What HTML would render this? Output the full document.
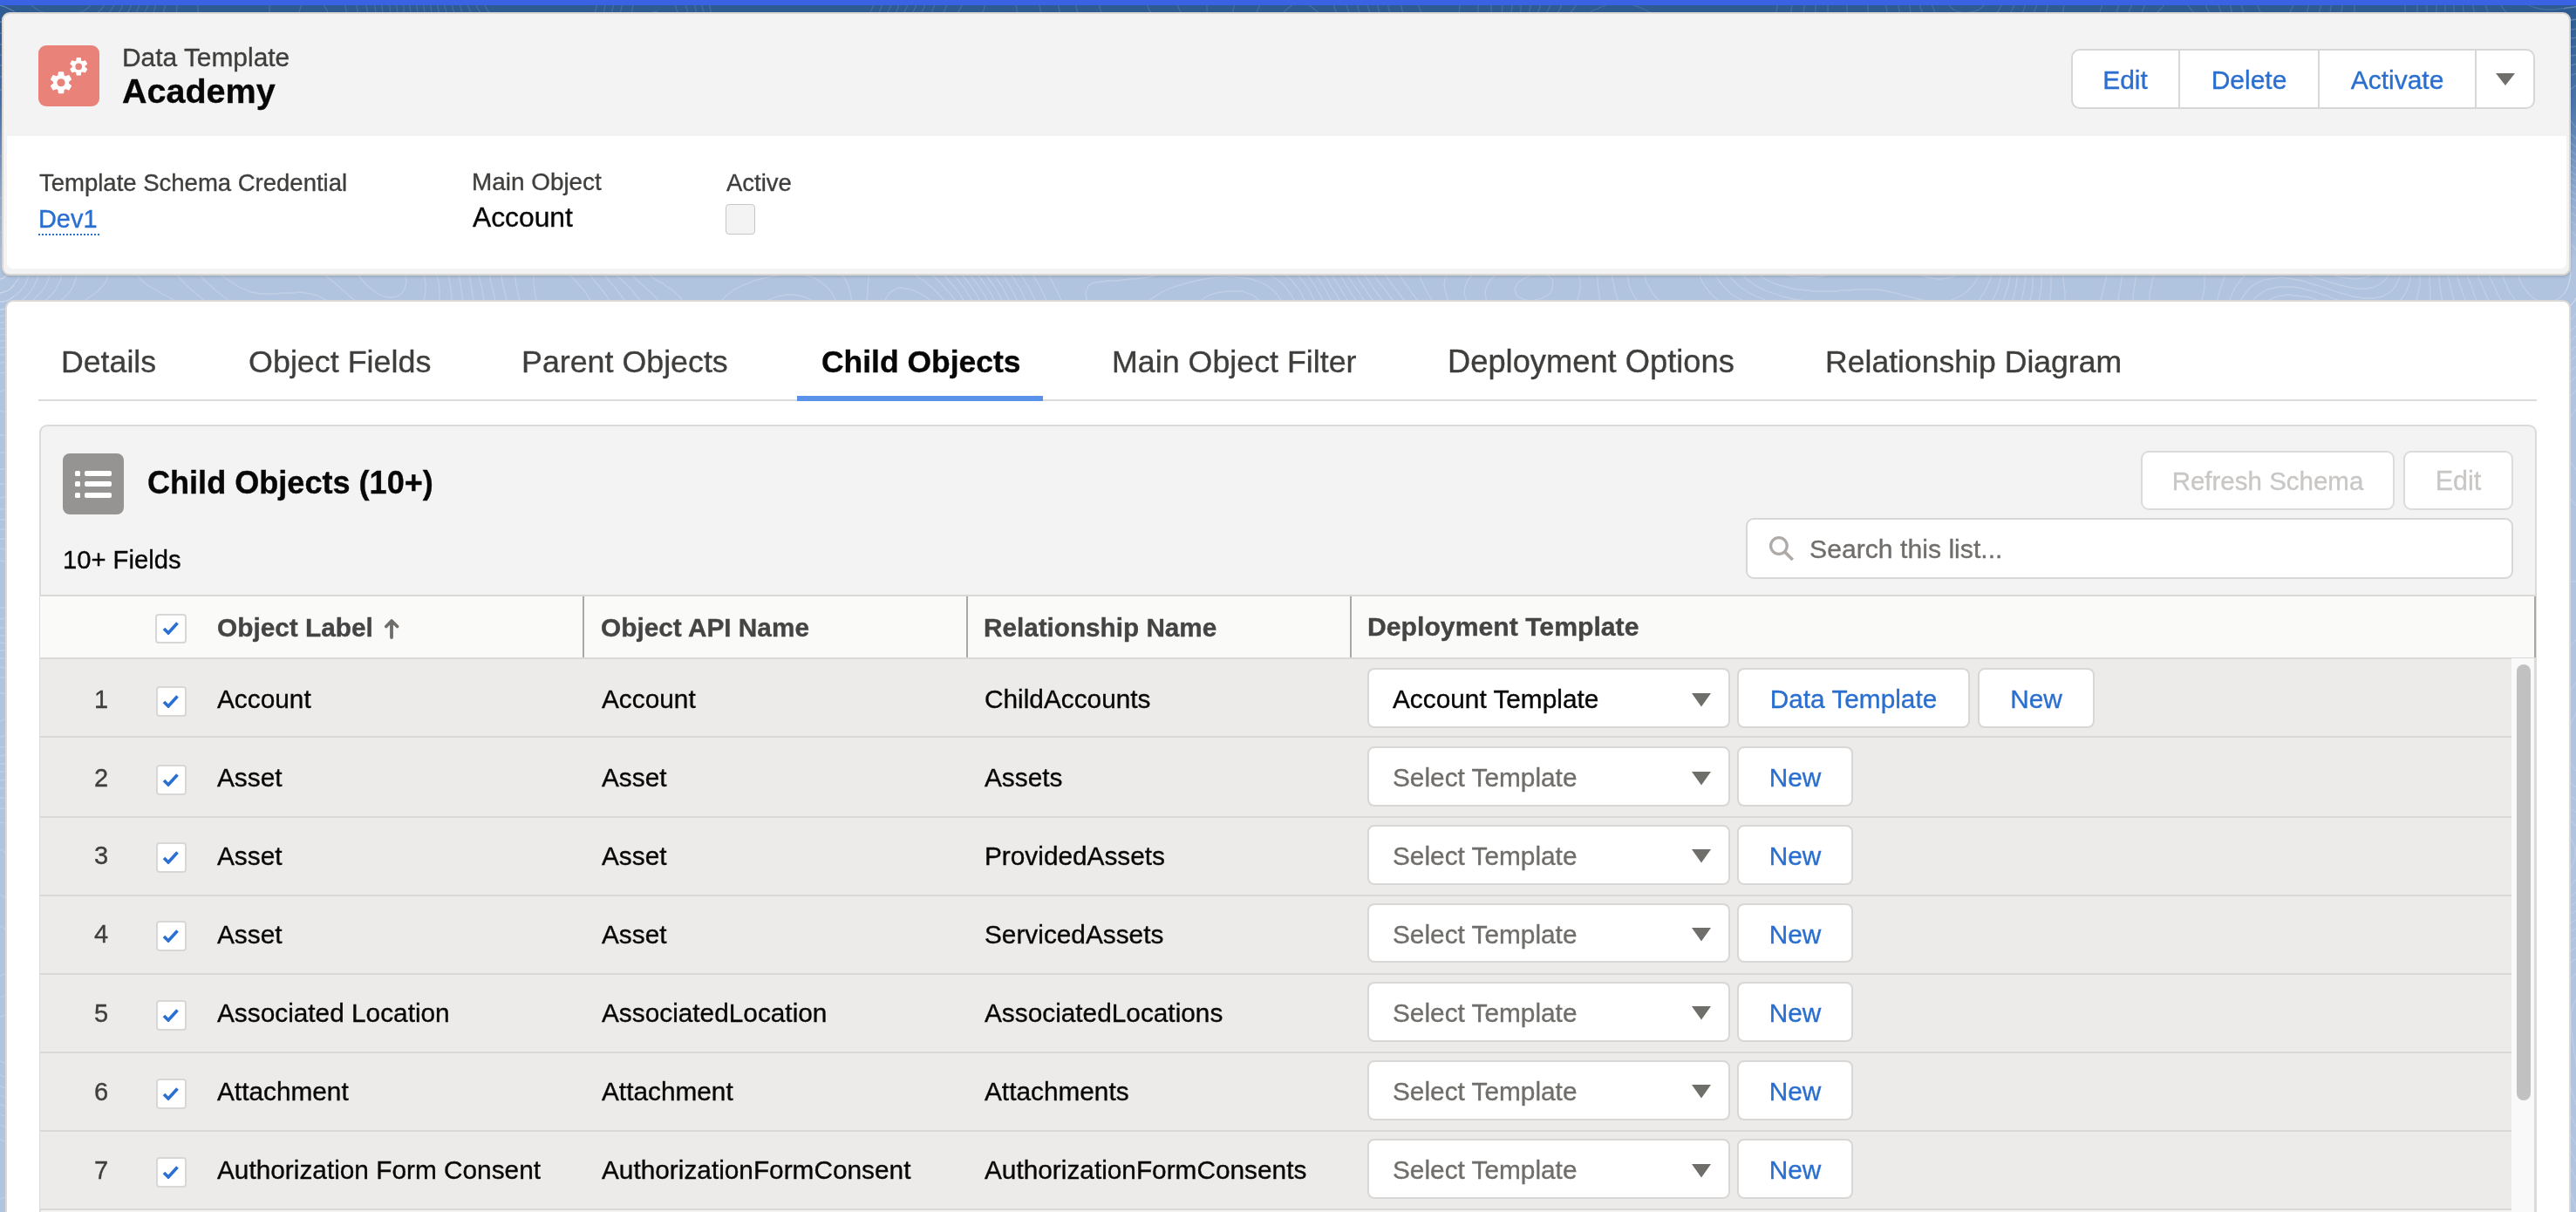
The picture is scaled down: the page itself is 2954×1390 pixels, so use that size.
<!DOCTYPE html><html><head><meta charset="utf-8"><style>
html,body{margin:0;padding:0;width:2954px;height:1390px;overflow:hidden;}
body{width:2954px;height:1390px;overflow:hidden;position:relative;font-family:"Liberation Sans",sans-serif;
background:linear-gradient(180deg,#2d5b92 0px,#2d5b92 14px,#4a74aa 120px,#8ea8cc 220px,#b1c4df 300px,#b1c4df 1390px);}
.t{position:absolute;white-space:nowrap;line-height:1;will-change:transform;-webkit-text-stroke:0.35px currentColor;}
.r{position:absolute;box-sizing:border-box;}
</style></head><body>
<svg style="position:absolute;left:0;top:0" width="2954" height="1390"><path fill="none" stroke="rgba(255,255,255,0.12)" stroke-width="1.3" d="M555,0 556,6 559,12 563,16 567,20 572,23 576,26 580,28 M675,28 677,24 680,19 683,12 684,8 685,0 685,0 M813,0 814,8 816,16 818,20 820,25 822,28 M988,28 992,23 996,18 999,12 1001,8 1002,0 1002,0 M545,0 547,8 549,12 552,16 556,21 560,24 566,28 566,28 M686,28 688,24 691,16 693,12 694,4 694,0 M804,0 805,8 808,16 809,20 812,26 813,28 M999,28 1002,24 1005,20 1008,14 1011,8 1012,3 1012,0 M535,0 536,5 539,12 541,16 544,20 548,24 553,28 553,28 M696,28 700,20 701,16 703,8 704,0 704,0 M796,0 796,4 798,12 800,19 802,24 804,28 804,28 M1009,28 1012,24 1016,17 1019,12 1021,8 1022,0 1022,0 M526,0 528,8 529,12 532,17 536,23 540,27 541,28 M707,28 708,24 711,16 712,12 714,4 714,0 M786,0 787,8 788,12 791,20 793,24 795,28 M1018,28 1021,24 1024,20 1028,13 1030,8 1031,0 1031,0 M518,0 519,8 520,12 524,20 526,24 529,28 529,28 M718,28 720,24 723,16 725,12 726,4 726,0 M774,0 775,8 776,12 780,20 782,24 784,28 784,28 M1028,28 1031,24 1033,20 1036,16 1040,8 1041,4 1041,0 M509,0 510,8 512,14 514,20 516,24 519,28 M1037,28 1040,24 1044,19 1048,12 1050,8 1051,0 1051,0 M734,28 737,24 740,20 744,16 752,13 757,16 762,20 766,24 769,28 769,28 M501,0 502,8 504,16 505,20 508,27 509,28 M1047,28 1050,24 1053,20 1056,16 1060,8 1061,4 1061,0 M1873,28 1868,26 1860,24 1856,24 1848,23 1840,24 1836,24 1828,26 1823,28 1823,28 M33,0 36,6 40,9 44,12 52,15 56,16 64,17 72,17 80,17 85,16 92,14 97,12 102,8 106,4 107,0 M493,0 494,8 495,16 496,20 499,28 499,28 M1058,28 1062,24 1065,20 1068,15 1071,8 1073,4 1073,0 M1911,28 1907,24 1902,20 1896,16 1892,14 1888,12 1880,8 1876,7 1868,4 1864,2 1856,0 1848,3 1844,5 1836,8 1832,10 1827,12 1820,16 1816,18 1812,21 1807,24 1802,28 1802,28 M1990,0 1996,2 1997,0 M2233,0 2236,7 2240,11 2244,13 2252,15 2260,14 2268,12 2272,9 2276,5 2277,0 2277,0 M0,6 6,8 12,11 16,13 21,16 28,20 32,21 40,24 44,25 52,26 60,27 68,27 76,27 84,26 92,24 96,23 103,20 108,17 112,14 116,11 120,5 121,0 121,0 M485,0 486,8 487,16 488,20 490,28 490,28 M1071,28 1074,24 1078,20 1081,16 1084,10 1086,4 1087,0 M1809,0 1808,5 1804,11 1800,15 1796,20 1792,24 1789,28 1789,28 M2034,28 2036,20 2036,16 2038,8 2038,0 2038,0 M2215,0 2216,7 2218,12 2220,16 2224,20 2229,24 2236,28 2236,28 M2267,28 2272,26 2277,24 2283,20 2288,16 2292,12 2294,8 2296,4 2297,0 M2505,28 2500,26 2492,26 2484,28 2484,28 M104,28 112,24 116,22 120,19 124,16 128,11 132,4 132,0 132,0 M478,0 478,8 479,16 480,21 482,28 482,28 M1086,28 1090,24 1094,20 1098,16 1100,12 1104,4 1104,0 M1792,0 1790,8 1788,12 1784,18 1780,24 1778,28 1778,28 M2053,28 2054,20 2054,12 2055,4 2055,0 M2201,0 2202,8 2204,14 2207,20 2209,24 2212,28 2212,28 M2292,28 2296,25 2300,21 2304,17 2307,12 2309,8 2311,0 2311,0 M2484,0 2483,4 2480,8 2476,12 2472,17 2468,21 2464,25 2461,28 M2528,28 2524,24 2520,19 2516,15 2512,10 2508,5 2506,0 2506,0 M2701,0 2700,8 2700,12 2698,20 2696,27 2696,28 M2757,28 2758,20 2758,12 2758,4 2758,0 M0,25 8,26 15,28 15,28 M120,28 126,24 131,20 135,16 138,12 140,8 142,0 142,0 M470,0 470,8 471,16 472,21 473,28 473,28 M1112,28 1116,25 1120,22 1124,18 1128,12 1129,8 1130,0 1130,0 M1486,0 1484,4 1479,8 1474,12 1470,16 1465,20 1461,24 1457,28 1457,28 M1526,28 1522,24 1518,20 1513,16 1509,12 1504,8 1500,5 1496,0 1496,0 M1778,0 1777,8 1775,12 1772,20 1770,24 1768,28 1768,28 M2067,28 2068,20 2068,16 2069,8 2069,0 2069,0 M2189,0 2190,8 2191,16 2193,20 2196,28 2196,28 M2308,28 2312,24 2316,19 2320,13 2322,8 2323,0 2323,0 M2461,0 2460,5 2457,12 2455,16 2452,20 2448,26 2447,28 M2541,28 2539,24 2536,19 2532,12 2530,8 2529,0 2529,0 M2686,0 2686,8 2684,16 2683,20 2681,28 2681,28 M2771,28 2771,20 2772,12 2772,8 2772,0 2772,0 M133,28 138,24 142,20 145,16 148,12 151,4 151,0 M462,0 463,8 463,16 464,21 465,28 465,28 M1172,28 1170,24 1168,18 1166,12 1165,4 1165,0 M1445,0 1444,7 1442,12 1440,16 1436,23 1433,28 1433,28 M1542,28 1540,24 1536,19 1532,13 1530,8 1528,0 1528,0 M1767,0 1766,8 1764,13 1762,20 1760,24 1759,28 M2081,28 2081,20 2082,12 2082,4 2082,0 M2177,0 2177,8 2179,16 2180,22 2182,28 2182,28 M2323,28 2326,24 2329,20 2332,15 2335,8 2336,0 2336,0 M2445,0 2444,7 2442,12 2440,17 2436,24 2433,28 2433,28 M2554,28 2551,24 2548,17 2546,12 2544,6 2543,0 2543,0 M2673,0 2673,8 2672,14 2671,20 2668,28 2668,28 M2782,28 2783,20 2783,12 2783,4 2783,0 M145,28 149,24 152,20 156,15 159,8 160,4 161,0 M454,0 455,8 456,16 456,20 457,28 457,28 M1202,28 1199,24 1196,18 1193,12 1192,7 1191,0 1191,0 M1416,0 1416,4 1414,12 1412,20 1411,24 1410,28 M1555,28 1552,23 1548,16 1546,12 1544,6 1543,0 1543,0 M1756,0 1755,8 1753,16 1752,20 1749,28 1749,28 M2096,28 2096,20 2096,12 2096,4 2096,0 M2163,0 2163,8 2164,13 2165,20 2166,28 2166,28 M2339,28 2342,24 2344,20 2347,12 2348,8 2349,0 2349,0 M2430,0 2429,8 2428,12 2424,19 2421,24 2419,28 2419,28 M2566,28 2564,24 2560,16 2559,12 2557,4 2556,0 M2661,0 2661,8 2660,12 2658,20 2656,26 2655,28 M2793,28 2793,20 2794,12 2794,4 2794,0 M156,28 160,23 164,18 167,12 169,8 170,0 170,0 M446,0 447,8 448,16 448,20 449,28 449,28 M1223,28 1220,23 1216,16 1215,12 1213,4 1212,0 M1383,0 1384,8 1384,12 1385,20 1386,28 1386,28 M1566,28 1564,24 1560,16 1558,12 1556,4 1556,0 1556,0 M1745,0 1744,8 1744,12 1742,20 1740,28 1740,28 M2120,28 2119,20 2118,12 2118,4 2118,0 M2142,0 2142,8 2142,16 2143,24 2143,28 M2359,28 2362,24 2364,18 2366,12 2367,4 2367,0 M2412,0 2410,8 2408,14 2405,20 2402,24 2400,28 2400,28 M2580,28 2578,24 2576,20 2572,12 2571,8 2570,0 2570,0 M2648,0 2647,8 2645,16 2644,20 2640,28 2640,28 M2804,28 2804,20 2804,12 2804,4 2804,0 M168,28 171,24 173,20 176,15 178,8 179,0 179,0 M438,0 438,8 439,16 440,22 441,28 441,28 M1243,28 1240,22 1237,16 1235,12 1233,4 1233,0 M1350,0 1351,8 1353,12 1356,19 1359,24 1361,28 1361,28 M1577,28 1575,24 1572,18 1570,12 1568,6 1567,0 1567,0 M1734,0 1734,8 1733,16 1732,20 1731,28 1731,28 M2630,0 2629,8 2627,12 2624,18 2620,22 2616,24 2608,25 2603,24 2598,20 2594,16 2591,12 2588,4 2588,0 2588,0 M2815,28 2815,20 2814,12 2814,4 2814,0 M181,28 184,22 187,16 188,12 190,4 190,0 M429,0 430,8 431,16 432,24 432,28 432,28 M1269,28 1267,24 1264,17 1262,12 1260,4 1260,0 M1315,0 1316,7 1318,12 1321,16 1324,20 1328,25 1330,28 M1589,28 1586,24 1584,19 1581,12 1580,8 1579,0 1579,0 M1723,0 1723,8 1722,16 1721,24 1720,28 M2827,28 2826,20 2825,12 2824,4 2824,0 M197,28 200,21 202,16 203,8 204,1 204,0 M420,0 420,5 421,12 422,20 423,28 423,28 M1601,28 1599,24 1596,18 1593,12 1592,8 1591,0 1591,0 M1710,0 1710,8 1710,16 1709,24 1709,28 M2843,28 2840,22 2838,16 2836,8 2836,4 2836,0 M258,28 252,28 244,28 236,26 232,24 228,16 227,12 227,4 227,0 M409,0 409,8 411,16 412,22 413,28 413,28 M1616,28 1612,21 1609,16 1608,12 1606,4 1605,0 M1696,0 1695,8 1695,16 1694,24 1694,28 M2864,28 2860,24 2856,20 2854,16 2852,12 2850,4 2849,0 M312,28 310,20 309,12 309,4 309,0 M395,0 396,7 397,12 399,20 400,24 401,28 M1641,28 1637,24 1634,20 1631,16 1628,10 1626,4 1626,0 M1674,0 1674,8 1673,16 1672,21 1670,28 1670,28 M2956,22 2948,23 2940,24 2936,24 2928,25 2920,25 2912,25 2904,24 2900,24 2892,23 2884,20 2880,18 2876,16 2872,12 2868,6 2867,0 2867,0 M339,28 340,23 342,16 344,11 346,4 347,0 M370,0 372,7 375,12 377,16 380,21 384,28 384,28 M2956,7 2952,8 2944,9 2936,10 2928,11 2920,11 2912,10 2904,8 2900,6 2896,2 2895,0"/><path fill="none" stroke="rgba(255,255,255,0.2)" stroke-width="1.3" d="M2037,288 2043,292 2048,294 2054,296 2060,297 2068,297 2072,296 2080,294 2084,292 2092,288 2092,288 M2013,288 2016,293 2020,298 2024,303 2028,306 2032,308 2039,312 2044,314 2051,316 2056,317 2064,318 2072,318 2080,318 2088,317 2092,316 2100,314 2108,312 2112,311 2120,308 2124,307 2132,304 2136,304 2144,302 2152,302 2160,303 2167,304 2172,305 2180,308 2184,309 2192,312 2196,313 2204,316 2208,317 2216,319 2224,320 2232,319 2240,317 2244,315 2248,312 2252,308 2256,303 2259,296 2261,292 2261,288 M683,356 680,349 677,344 674,340 672,336 668,331 664,327 660,322 656,318 652,314 648,310 644,307 640,304 633,300 628,299 621,300 617,304 614,308 612,316 612,324 613,332 614,340 616,347 618,352 619,356 M1762,344 1768,342 1773,340 1778,336 1780,332 1781,324 1780,320 1775,316 1768,314 1760,314 1754,316 1748,319 1744,322 1740,325 1737,332 1740,340 1744,342 1749,344 1756,345 1762,344 1762,344 M590,288 589,296 589,304 590,312 591,320 592,328 593,332 595,340 596,346 598,352 599,356 M705,356 703,352 700,347 696,340 693,336 690,332 687,328 683,324 680,320 676,315 672,310 668,305 664,300 661,296 658,292 655,288 655,288 M1783,288 1776,288 1768,290 1761,292 1756,294 1750,296 1744,298 1740,300 1732,304 1728,307 1724,309 1720,312 1715,316 1710,320 1707,324 1704,331 1703,336 1704,342 1707,348 1710,352 1715,356 1715,356 M1801,356 1805,352 1808,346 1810,340 1812,332 1812,324 1811,316 1809,308 1808,304 1804,298 1800,293 1796,291 1788,288 1784,288 M1997,288 2000,295 2003,300 2006,304 2009,308 2013,312 2018,316 2024,320 2028,322 2032,324 2040,327 2044,328 2052,330 2060,332 2064,332 2072,333 2080,334 2088,334 2096,334 2104,334 2112,333 2120,333 2128,332 2133,332 2140,332 2147,332 2152,332 2160,333 2168,335 2174,336 2180,338 2188,340 2192,341 2200,343 2204,344 2212,346 2220,346 2228,346 2236,345 2240,343 2247,340 2252,337 2256,334 2260,330 2264,325 2267,320 2270,316 2272,311 2274,304 2276,296 2276,292 2276,288 M571,288 572,296 572,300 573,308 575,316 576,323 577,328 579,336 580,341 582,348 584,356 584,356 M723,356 720,350 716,344 713,340 710,336 707,332 704,328 700,324 696,319 692,314 688,310 684,305 681,300 678,296 675,292 672,288 M1736,288 1728,291 1724,293 1719,296 1712,299 1708,302 1704,304 1697,308 1692,312 1688,316 1684,320 1682,324 1680,329 1679,336 1680,340 1683,348 1685,352 1688,356 1688,356 M1836,356 1835,348 1834,340 1833,332 1832,324 1832,320 1831,312 1830,304 1828,296 1828,292 1827,288 M1983,288 1985,292 1988,299 1990,304 1993,308 1996,312 2000,317 2004,321 2008,324 2014,328 2020,331 2024,333 2032,336 2036,337 2044,340 2048,341 2056,343 2064,344 2068,345 2076,346 2084,347 2092,348 2096,348 2104,349 2112,350 2120,351 2128,351 2132,352 2140,353 2148,355 2155,356 2155,356 M2258,356 2263,352 2266,348 2270,344 2272,340 2276,334 2279,328 2281,324 2284,316 2285,312 2287,304 2288,296 2288,288 2288,288 M1048,356 1044,356 1042,356 M556,288 557,292 558,300 560,308 561,312 562,320 564,328 565,332 567,340 568,347 569,352 570,356 M741,356 739,352 736,347 732,342 728,337 724,332 720,328 716,324 712,320 708,316 705,312 701,308 698,304 695,300 692,296 688,291 686,288 M1707,288 1700,291 1696,293 1688,296 1684,298 1679,300 1672,303 1668,306 1664,309 1660,313 1657,320 1656,328 1658,336 1660,343 1663,348 1665,352 1668,356 M1863,356 1860,352 1856,345 1854,340 1852,334 1851,328 1849,320 1848,312 1848,308 1847,300 1847,292 1847,288 M1970,288 1972,293 1975,300 1976,304 1980,311 1983,316 1986,320 1990,324 1994,328 2000,332 2004,335 2008,337 2014,340 2020,342 2024,344 2032,347 2037,348 2044,350 2052,352 2056,353 2064,354 2072,356 2073,356 M2278,356 2281,352 2284,346 2287,340 2289,336 2292,328 2293,324 2295,316 2296,312 2297,304 2298,296 2297,288 2297,288 M1077,356 1074,352 1070,348 1066,344 1061,340 1056,337 1052,335 1045,332 1040,331 1032,330 1026,332 1020,336 1017,340 1015,344 1012,350 1010,356 1010,356 M542,288 544,294 545,300 547,308 548,312 550,320 552,328 553,332 554,340 556,348 557,352 557,356 M761,356 759,352 756,347 752,341 748,337 744,333 740,330 736,326 732,323 728,319 724,315 720,312 716,308 712,304 708,299 704,294 700,289 699,288 M988,288 992,291 995,296 996,300 996,308 996,316 996,320 995,328 995,336 994,344 994,352 994,356 M1091,356 1088,352 1084,346 1080,341 1076,337 1072,333 1068,329 1064,326 1060,322 1056,320 1051,316 1045,312 1040,309 1036,307 1032,304 1024,300 1020,297 1016,295 1011,292 1007,288 1007,288 M1614,288 1617,292 1620,298 1623,304 1624,308 1628,316 1629,320 1632,326 1635,332 1637,336 1640,341 1644,347 1648,352 1651,356 1651,356 M1887,356 1883,352 1880,348 1876,343 1872,336 1870,332 1868,326 1867,320 1865,312 1864,304 1865,296 1866,288 1866,288 M1956,288 1959,296 1960,300 1964,308 1965,312 1968,317 1972,323 1976,328 1980,332 1984,336 1988,339 1992,341 1997,344 2004,347 2008,349 2016,352 2020,353 2028,355 2031,356 M2292,356 2294,352 2296,347 2299,340 2300,336 2303,328 2304,321 2305,316 2306,308 2306,300 2306,292 2306,288 M122,288 122,296 123,304 124,312 123,320 120,325 116,330 112,334 108,337 104,340 98,344 92,347 88,350 84,352 76,356 76,356 M218,356 212,352 208,349 204,347 199,344 192,340 188,338 184,336 178,332 172,329 168,326 164,323 160,319 156,313 153,308 152,304 149,296 148,292 145,288 M530,288 532,295 533,300 536,308 537,312 539,320 540,326 541,332 542,340 544,348 544,352 545,356 M785,356 784,349 782,344 779,340 775,336 770,332 764,328 760,325 756,323 751,320 745,316 740,313 736,310 732,307 728,303 724,300 720,296 716,292 713,288 M879,288 884,289 892,289 900,290 908,291 916,291 921,292 928,293 936,295 940,296 948,300 952,302 956,305 960,308 964,312 968,318 971,324 973,328 975,336 976,340 977,348 978,356 978,356 M1101,356 1099,352 1096,346 1092,340 1089,336 1085,332 1082,328 1078,324 1074,320 1070,316 1065,312 1061,308 1056,304 1052,300 1048,296 1044,292 1041,288 1041,288 M1584,288 1588,293 1592,298 1596,303 1599,308 1602,312 1605,316 1608,320 1612,326 1616,331 1619,336 1622,340 1625,344 1628,348 1632,352 1635,356 M1914,356 1910,352 1906,348 1902,344 1898,340 1895,336 1892,331 1888,324 1887,320 1885,312 1884,304 1885,296 1887,288 1887,288 M1938,288 1940,293 1943,300 1944,304 1947,312 1949,316 1952,323 1955,328 1958,332 1961,336 1965,340 1970,344 1976,348 1980,350 1984,352 1992,355 1995,356 M2304,356 2305,352 2308,344 2309,340 2311,332 2312,328 2313,320 2314,312 2315,304 2315,296 2314,288 2314,288 M88,288 88,292 89,300 89,308 88,316 87,320 84,328 82,332 79,336 75,340 71,344 66,348 60,352 56,354 53,356 M247,356 242,352 238,348 233,344 229,340 224,336 220,333 216,329 212,325 208,321 204,316 201,312 198,308 196,304 193,296 191,292 190,288 M517,288 520,296 521,300 524,308 525,312 527,320 528,325 529,332 530,340 531,348 532,356 532,356 M821,288 819,292 816,298 812,303 808,306 804,308 796,311 788,312 780,311 772,310 764,308 760,307 753,304 748,301 744,299 739,296 734,292 729,288 729,288 M1111,356 1108,349 1105,344 1102,340 1100,336 1096,331 1092,326 1088,322 1084,317 1080,313 1076,309 1072,305 1068,301 1064,297 1060,292 1056,288 1056,288 M1569,288 1572,292 1576,298 1580,304 1583,308 1586,312 1589,316 1592,320 1596,326 1600,331 1604,336 1607,340 1610,344 1614,348 1617,352 1621,356 1621,356 M2315,356 2316,352 2318,344 2320,336 2321,332 2322,324 2323,316 2323,308 2323,300 2323,292 2322,288 M2659,288 2664,290 2671,292 2676,293 2684,294 2692,294 2700,292 2704,290 2707,288 M818,356 821,352 824,348 828,344 832,340 837,336 842,332 848,329 852,327 860,324 864,322 872,320 876,319 884,317 889,316 896,315 904,314 912,314 920,315 925,316 932,318 936,320 942,324 947,328 951,332 954,336 956,340 960,348 961,352 962,356 M71,288 72,296 72,304 71,312 70,320 68,324 64,332 61,336 57,340 53,344 48,348 44,351 40,354 36,356 M280,356 273,352 268,348 264,346 260,343 256,340 251,336 246,332 242,328 237,324 233,320 230,316 227,312 224,308 220,302 217,296 216,292 214,288 M504,288 508,296 509,300 512,308 513,312 515,320 516,325 517,332 518,340 518,348 518,356 518,356 M777,288 772,289 764,289 760,288 M1120,356 1118,352 1116,347 1112,340 1109,336 1107,332 1104,328 1100,323 1096,318 1092,314 1088,309 1084,305 1080,301 1076,296 1072,292 1069,288 1069,288 M1557,288 1560,292 1564,298 1568,304 1571,308 1573,312 1576,316 1580,322 1584,327 1588,332 1591,336 1594,340 1597,344 1601,348 1604,352 1608,356 M2325,356 2327,348 2328,344 2330,336 2331,328 2331,320 2332,312 2332,304 2331,296 2331,288 2331,288 M2483,288 2480,293 2476,300 2475,304 2472,310 2470,316 2468,322 2467,328 2465,336 2465,344 2465,352 2466,356 M2523,356 2524,351 2525,344 2527,336 2528,328 2528,324 2528,316 2528,310 2527,304 2526,296 2524,289 2523,288 M2630,288 2636,290 2640,292 2648,296 2652,297 2660,300 2664,302 2672,304 2676,305 2684,307 2692,308 2700,307 2708,305 2712,303 2717,300 2720,296 2724,290 2725,288 M857,356 864,352 868,350 872,348 880,344 884,343 892,340 896,339 904,338 912,338 920,340 924,341 930,344 935,348 939,352 942,356 942,356 M57,288 58,296 58,304 58,312 56,319 54,324 52,328 48,334 44,338 40,342 36,346 32,349 28,352 22,356 22,356 M393,356 388,352 384,350 380,347 374,344 368,341 364,339 356,337 350,336 344,335 336,336 329,336 324,336 316,337 308,337 300,337 294,336 288,335 281,332 276,330 272,328 266,324 260,320 256,317 252,313 248,309 244,304 242,300 240,296 237,288 237,288 M491,288 493,292 496,300 498,304 500,311 501,316 503,324 504,332 504,336 504,343 504,348 503,356 503,356 M1129,356 1127,352 1124,346 1121,340 1119,336 1116,332 1112,326 1108,321 1104,316 1100,312 1097,308 1093,304 1090,300 1086,296 1083,292 1080,288 1080,288 M1546,288 1549,292 1552,296 1556,302 1560,308 1562,312 1565,316 1568,320 1572,326 1576,332 1579,336 1582,340 1585,344 1589,348 1592,352 1596,356 M2337,356 2338,348 2339,340 2340,336 2341,328 2341,320 2341,312 2341,304 2340,296 2340,292 2339,288 M2456,288 2456,292 2454,300 2452,308 2451,312 2449,320 2448,327 2447,332 2446,340 2446,348 2446,356 2446,356 M2540,356 2541,352 2543,344 2544,339 2546,332 2548,326 2550,320 2552,315 2555,308 2558,304 2561,300 2566,296 2572,293 2576,291 2584,290 2592,291 2600,292 2604,292 2612,294 2618,296 2624,298 2630,300 2636,302 2642,304 2648,306 2653,308 2660,310 2665,312 2672,314 2678,316 2684,318 2692,319 2700,320 2708,319 2716,317 2720,315 2724,312 2728,308 2732,302 2735,296 2736,291 2737,288 M44,288 46,296 46,304 45,312 44,317 41,324 39,328 36,333 32,338 28,342 24,345 20,348 13,352 8,354 0,355 0,355 M422,356 417,352 412,348 408,345 404,342 400,339 396,335 392,332 388,328 383,324 378,320 373,316 368,313 364,310 359,308 352,306 344,306 336,307 332,308 324,310 316,311 310,312 304,312 297,312 292,311 284,309 280,307 276,304 271,300 267,296 264,290 263,288 M474,288 476,292 480,298 482,304 484,308 486,316 488,324 488,328 488,333 487,340 485,348 484,352 482,356 M1137,356 1135,352 1132,345 1130,340 1127,336 1124,331 1120,325 1116,320 1113,316 1110,312 1107,308 1103,304 1100,300 1096,296 1092,291 1090,288 M1536,288 1540,293 1544,299 1547,304 1550,308 1553,312 1556,317 1560,324 1563,328 1566,332 1568,336 1572,341 1576,346 1580,351 1584,355 1584,356 M2350,356 2351,348 2351,340 2352,332 2352,324 2352,316 2351,308 2350,300 2349,292 2349,288 M2439,288 2438,296 2436,304 2436,308 2434,316 2432,324 2432,328 2430,336 2429,344 2428,352 2428,356 M2553,356 2555,348 2557,344 2560,336 2562,332 2564,328 2568,323 2572,318 2576,315 2580,312 2588,308 2592,307 2600,306 2608,307 2616,307 2620,308 2628,310 2636,312 2640,313 2648,316 2652,317 2660,320 2664,321 2672,324 2676,325 2684,327 2688,328 2696,330 2704,331 2712,331 2720,330 2725,328 2732,324 2736,320 2739,316 2741,312 2744,304 2745,300 2746,292 2747,288 M33,288 35,296 35,304 34,312 32,319 30,324 28,328 24,333 20,337 16,340 10,344 4,346 0,346 M445,288 451,292 455,296 458,300 461,304 464,312 465,316 466,324 464,331 461,336 456,340 452,341 444,341 440,340 432,336 428,333 424,330 420,327 416,322 412,317 410,312 408,307 407,300 408,296 412,291 415,288 M1145,356 1144,352 1140,344 1138,340 1136,336 1132,330 1128,324 1125,320 1122,316 1119,312 1116,308 1112,303 1108,298 1104,294 1100,289 1099,288 M1526,288 1530,292 1532,296 1536,301 1540,307 1543,312 1546,316 1548,320 1552,326 1556,332 1559,336 1561,340 1564,344 1568,349 1572,354 1574,356 M2368,356 2368,348 2368,341 2368,336 2367,328 2366,320 2365,312 2364,307 2363,300 2361,292 2361,288 M2422,288 2421,296 2420,301 2418,308 2416,316 2415,320 2413,328 2412,332 2410,340 2408,348 2407,352 2406,356 M2564,356 2568,348 2570,344 2572,340 2576,335 2580,330 2584,327 2589,324 2596,321 2600,320 2608,319 2616,318 2624,319 2629,320 2636,321 2644,323 2648,325 2656,327 2660,328 2668,331 2672,332 2680,335 2684,336 2692,338 2698,340 2704,341 2712,342 2720,342 2728,341 2732,340 2739,336 2744,332 2747,328 2749,324 2752,317 2754,312 2755,304 2756,296 2756,292 2756,288 M22,288 24,296 24,300 24,307 23,312 21,320 18,324 15,328 11,332 4,335 0,336 M1154,356 1152,352 1149,344 1147,340 1144,335 1140,328 1137,324 1134,320 1131,316 1128,312 1124,307 1120,302 1116,297 1112,292 1109,288 1109,288 M1517,288 1520,292 1524,297 1528,303 1532,308 1534,312 1537,316 1540,321 1544,328 1547,332 1549,336 1552,340 1556,346 1560,352 1563,356 1563,356 M2395,288 2388,292 2384,288 M2576,356 2578,352 2580,348 2584,344 2588,340 2593,336 2600,332 2604,331 2612,329 2620,329 2628,329 2636,330 2644,332 2648,333 2656,335 2660,337 2668,339 2672,341 2680,344 2684,345 2692,347 2696,349 2704,351 2708,352 2716,353 2724,354 2732,354 2740,352 2744,351 2748,348 2753,344 2756,340 2760,333 2762,328 2764,320 2764,316 2765,308 2765,300 2765,292 2765,288 M5,288 8,292 11,300 11,308 8,315 4,319 0,320 0,320 M1162,356 1160,350 1157,344 1155,340 1152,334 1149,328 1146,324 1143,320 1140,315 1136,310 1132,305 1128,300 1125,296 1121,292 1118,288 1118,288 M1506,288 1510,292 1513,296 1517,300 1520,304 1524,310 1528,316 1530,320 1533,324 1536,329 1540,336 1543,340 1545,344 1548,348 1552,354 1553,356 M2765,356 2768,352 2771,344 2772,340 2774,332 2775,324 2775,316 2775,308 2774,300 2774,292 2773,288 M2588,356 2591,352 2595,348 2600,345 2604,343 2611,340 2616,339 2624,338 2632,339 2640,340 2644,340 2652,342 2657,344 2664,346 2669,348 2676,350 2680,352 2688,355 2691,356 M1171,356 1168,348 1166,344 1164,339 1160,332 1158,328 1155,324 1152,319 1148,313 1144,308 1141,304 1138,300 1135,296 1131,292 1128,288 M1495,288 1499,292 1503,296 1507,300 1510,304 1513,308 1516,312 1520,318 1524,324 1526,328 1529,332 1532,337 1536,344 1538,348 1541,352 1543,356 M2785,356 2786,348 2787,340 2787,332 2786,324 2786,316 2785,308 2784,303 2783,296 2782,288 2782,288 M2602,356 2608,352 2612,351 2620,348 2624,348 2632,347 2638,348 2644,349 2652,351 2657,352 2664,354 2669,356 2669,356 M1181,356 1180,352 1176,344 1174,340 1172,335 1168,328 1165,324 1163,320 1160,316 1156,310 1152,305 1148,300 1145,296 1142,292 1139,288 1139,288 M1481,288 1487,292 1492,296 1496,300 1500,304 1503,308 1507,312 1510,316 1512,320 1516,326 1520,332 1522,336 1524,340 1528,346 1531,352 1534,356 1534,356 M2802,356 2801,348 2800,341 2799,336 2798,328 2797,320 2796,315 2795,308 2793,300 2792,296 2790,288 2790,288 M1192,356 1191,352 1188,346 1185,340 1183,336 1180,330 1176,324 1174,320 1171,316 1168,311 1164,306 1160,300 1157,296 1154,292 1151,288 1151,288 M1464,288 1468,290 1472,292 1478,296 1484,300 1488,304 1492,307 1496,312 1500,316 1503,320 1505,324 1508,328 1512,335 1515,340 1517,344 1520,350 1523,356 1523,356 M2817,356 2816,352 2814,344 2812,337 2811,332 2809,324 2808,320 2806,312 2804,306 2802,300 2800,292 2799,288 2799,288 M1205,356 1204,352 1200,344 1198,340 1196,336 1192,328 1190,324 1187,320 1184,315 1180,309 1177,304 1174,300 1171,296 1168,292 1165,288 M1295,288 1300,288 1308,289 1316,289 1324,288 1332,288 1332,288 M1431,288 1436,289 1444,291 1449,292 1456,294 1460,296 1468,300 1472,302 1476,305 1480,308 1485,312 1489,316 1492,320 1496,325 1500,331 1503,336 1505,340 1508,346 1511,352 1513,356 1513,356 M2832,356 2828,348 2827,344 2824,336 2823,332 2820,324 2819,320 2816,312 2815,308 2813,300 2811,296 2808,288 2808,288 M1222,356 1220,351 1217,344 1215,340 1212,333 1209,328 1207,324 1204,318 1201,312 1199,308 1196,303 1192,296 1191,292 1189,288 M1235,288 1240,290 1246,292 1252,294 1259,296 1264,297 1272,299 1276,300 1284,301 1292,302 1300,302 1308,302 1316,302 1324,301 1332,300 1336,300 1344,299 1352,298 1360,298 1368,297 1376,296 1380,296 1388,296 1396,295 1404,295 1412,296 1417,296 1424,297 1432,298 1440,299 1444,300 1452,303 1456,304 1464,308 1468,311 1472,313 1476,317 1480,320 1484,325 1488,330 1492,336 1494,340 1496,344 1500,352 1501,356 1501,356 M2846,356 2844,352 2840,344 2838,340 2836,334 2834,328 2832,323 2829,316 2828,312 2825,304 2823,300 2820,292 2819,288 2819,288 M2860,356 2858,352 2856,348 2852,341 2850,336 2848,332 2845,324 2843,320 2840,312 2838,308 2836,302 2834,296 2832,292 2830,288 M1250,356 1248,351 1246,344 1245,336 1248,328 1252,325 1256,324 1264,323 1272,322 1280,322 1288,321 1296,320 1300,320 1308,319 1316,318 1324,316 1328,315 1336,314 1344,312 1348,312 1356,310 1364,309 1372,308 1376,308 1384,307 1392,306 1400,306 1408,306 1416,306 1424,307 1432,308 1436,308 1444,311 1448,312 1456,315 1460,318 1464,320 1469,324 1473,328 1476,332 1480,337 1484,344 1486,348 1488,355 1488,356 M2876,356 2873,352 2870,348 2868,344 2864,337 2862,332 2860,328 2856,320 2855,316 2852,309 2850,304 2848,299 2845,292 2844,288 2844,288 M1313,356 1316,348 1319,344 1324,340 1328,338 1332,335 1339,332 1344,330 1349,328 1356,326 1363,324 1368,323 1376,321 1381,320 1388,319 1396,318 1404,318 1412,317 1420,318 1428,319 1435,320 1440,322 1446,324 1452,327 1456,330 1460,333 1464,337 1468,343 1470,348 1472,354 1472,356 M2896,356 2891,352 2887,348 2884,344 2880,338 2876,332 2875,328 2872,322 2870,316 2868,312 2865,304 2864,300 2861,292 2860,288 M1375,356 1375,348 1378,344 1384,340 1388,338 1395,336 1400,335 1408,334 1416,334 1424,334 1430,336 1436,338 1440,341 1444,345 1448,352 1447,356 M2956,338 2953,344 2950,348 2946,352 2942,356 2942,356 M2934,288 2939,292 2942,296 2944,300 2947,308 2948,316 2946,324 2944,331 2941,336 2937,340 2932,344 2928,345 2920,347 2912,345 2908,344 2903,340 2899,336 2896,332 2892,326 2889,320 2888,316 2886,308 2884,300 2884,292 2885,288"/><path fill="none" stroke="rgba(255,255,255,0.16)" stroke-width="1.3" d="M16,443 12,445 4,448 0,449 0,449 M0,471 5,472 12,474 16,476 16,476 M16,425 8,427 0,428 0,428 M0,499 8,499 14,500 16,500 M16,414 8,415 1,416 0,416 M0,519 8,519 16,519 16,519 M0,827 8,824 12,820 14,816 15,808 12,801 8,797 4,795 0,795 M0,6 6,8 12,11 16,13 16,13 M16,404 8,406 0,407 0,407 M0,538 8,538 16,537 16,537 M16,781 12,779 4,777 0,777 M0,845 5,844 12,842 16,840 M0,25 8,26 15,28 16,28 M16,396 8,398 0,399 0,399 M0,555 8,555 16,554 16,554 M16,768 8,766 0,765 0,765 M0,857 7,856 12,855 16,854 M0,38 8,39 14,40 16,40 M16,389 8,391 0,391 0,391 M0,571 8,570 16,570 16,570 M16,757 11,756 4,755 0,755 M0,867 8,866 16,865 16,865 M0,51 8,51 15,52 16,52 M16,381 8,383 1,384 0,384 M0,584 8,584 16,584 16,584 M16,747 8,746 0,746 0,746 M0,876 6,876 12,875 16,875 M0,63 8,63 16,64 16,64 M16,374 9,376 4,377 0,377 M0,596 8,596 16,596 16,596 M16,738 8,738 0,737 0,737 M0,885 8,885 16,884 16,884 M0,75 8,75 16,75 16,75 M16,367 12,368 4,370 0,370 M0,607 8,607 16,607 16,607 M16,729 8,729 0,729 0,729 M0,895 8,894 16,894 16,894 M0,88 8,87 16,87 16,87 M16,359 12,360 4,362 0,363 M0,618 8,618 16,619 16,619 M16,719 8,720 0,720 0,720 M0,904 8,904 16,904 16,904 M0,103 8,103 16,102 16,102 M16,180 8,179 0,179 0,179 M0,227 4,228 12,232 16,236 16,236 M16,350 12,352 4,355 0,355 M0,629 8,630 16,631 16,631 M16,708 8,709 0,710 0,710 M0,915 8,915 16,915 16,915 M0,249 8,251 12,253 16,257 16,257 M16,340 10,344 4,346 0,346 M0,643 8,644 12,645 16,646 M16,695 12,696 4,697 0,697 M0,927 8,928 12,928 16,929 M0,266 7,268 12,272 16,276 16,277 M16,327 12,331 8,334 0,336 0,336 M0,943 6,944 12,946 16,949 16,949 M16,1183 15,1188 14,1196 15,1204 16,1206 M0,286 5,288 8,292 11,300 11,308 8,315 4,319 0,320 0,320 M0,974 4,976 8,981 11,988 12,992 14,1000 16,1006 16,1006 M16,1155 12,1159 8,1163 4,1165 0,1166 M0,1217 7,1220 12,1224 15,1228 16,1229 M0,1026 4,1028 8,1032 12,1039 14,1044 16,1048 16,1048 M16,1133 12,1137 8,1141 0,1144 0,1144 M0,1233 8,1236 12,1239 16,1242 16,1242 M0,1062 4,1064 8,1069 11,1076 12,1080 13,1088 13,1096 12,1104 11,1108 8,1114 4,1118 0,1119 M0,1246 8,1248 12,1250 16,1254 16,1254 M0,1256 8,1259 12,1261 16,1265 16,1265 M0,1267 5,1268 12,1272 16,1276 16,1276 M0,1278 7,1280 12,1284 16,1288 16,1288 M0,1290 5,1292 11,1296 14,1300 16,1302 M16,1390 11,1392 11,1392 M0,1307 4,1308 9,1312 12,1317 15,1324 16,1326 M16,1363 13,1368 9,1372 4,1374 0,1375"/><path fill="none" stroke="rgba(255,255,255,0.16)" stroke-width="1.3" d="M2956,1142 2953,1148 2951,1152 2949,1160 2948,1168 2948,1176 2949,1184 2950,1192 2951,1200 2952,1208 2953,1212 2954,1220 2955,1228 2956,1231 M2956,1115 2952,1119 2948,1123 2944,1127 2941,1132 2940,1134 M2940,1215 2941,1220 2943,1228 2944,1232 2946,1240 2948,1247 2949,1252 2952,1260 2953,1264 2956,1272 2956,1273 M2956,97 2951,100 2946,104 2943,108 2941,116 2941,124 2944,131 2946,136 2949,140 2952,144 2956,148 M2956,1099 2952,1101 2948,1104 2944,1108 2940,1112 M2940,1256 2941,1260 2944,1268 2945,1272 2948,1279 2950,1284 2952,1288 2956,1296 2956,1297 M2956,84 2952,85 2944,88 2940,90 2940,90 M2940,145 2944,150 2948,154 2952,157 2956,161 2956,161 M2956,1086 2952,1088 2946,1092 2941,1096 2940,1097 M2940,1283 2942,1288 2944,1293 2947,1300 2949,1304 2952,1309 2956,1316 2956,1316 M2956,73 2948,75 2942,76 2940,77 M2940,158 2944,161 2948,164 2953,168 2956,170 M2956,1074 2952,1077 2947,1080 2941,1084 2940,1085 M2940,1305 2943,1312 2945,1316 2948,1321 2952,1328 2954,1332 2956,1335 M2956,63 2948,64 2944,65 2940,66 M2940,167 2944,170 2948,173 2952,176 2956,179 M2956,1064 2952,1066 2948,1068 2943,1072 2940,1074 M2940,1326 2943,1332 2945,1336 2948,1341 2952,1348 2954,1352 2956,1356 M2956,53 2948,54 2940,55 2940,55 M2940,176 2946,180 2952,184 2956,187 2956,187 M2956,813 2953,820 2951,824 2948,830 2946,836 2944,841 2942,848 2942,856 2943,864 2945,868 2948,875 2951,880 2954,884 2956,886 M2956,1054 2952,1056 2946,1060 2940,1064 2940,1064 M2940,1349 2943,1356 2945,1360 2948,1368 2949,1372 2952,1379 2953,1384 2956,1392 2956,1392 M2956,43 2948,44 2944,44 2940,45 M2940,184 2946,188 2952,192 2956,194 2956,194 M2956,779 2953,784 2950,788 2948,792 2944,798 2940,804 2940,804 M2940,892 2944,894 2948,898 2952,901 2956,904 2956,904 M2956,1044 2952,1046 2948,1048 2943,1052 2940,1054 M2956,33 2948,34 2940,34 2940,34 M2940,192 2944,194 2948,197 2953,200 2956,202 M2956,466 2952,472 2949,476 2947,480 2944,485 2941,492 2940,495 M2940,511 2941,516 2944,522 2947,528 2949,532 2952,536 2956,542 2956,542 M2956,732 2952,736 2948,740 2944,744 2940,747 2940,747 M2940,909 2946,912 2952,916 2956,919 2956,919 M2956,1033 2952,1036 2946,1040 2940,1044 2940,1044 M2956,22 2948,23 2940,24 2940,24 M2940,199 2944,202 2948,204 2955,208 2956,209 M2956,446 2952,450 2948,453 2944,456 2940,459 M2940,561 2944,566 2948,572 2951,576 2954,580 2956,583 M2956,667 2948,667 2940,665 2940,665 M2940,923 2944,925 2949,928 2955,932 2956,933 M2956,1022 2952,1025 2947,1028 2942,1032 2940,1033 M2956,7 2952,8 2944,9 2940,10 M2940,207 2944,209 2949,212 2956,216 2956,216 M2956,431 2952,434 2948,437 2944,440 2940,443 M2940,937 2945,940 2951,944 2955,948 2956,949 M2956,1007 2952,1011 2948,1015 2944,1018 2940,1021 2940,1021 M2940,215 2944,217 2949,220 2956,224 2956,224 M2956,419 2952,422 2948,425 2942,428 2940,429 M2940,954 2944,957 2948,962 2951,968 2953,972 2953,980 2952,987 2950,992 2948,996 2944,1001 2940,1006 2940,1006 M2940,222 2944,225 2950,228 2956,231 2956,231 M2956,407 2952,410 2948,413 2943,416 2940,417 M2940,231 2944,233 2949,236 2956,240 2956,240 M2956,396 2952,399 2948,402 2944,404 2940,406 M2940,240 2944,242 2948,244 2955,248 2956,249 M2956,384 2951,388 2946,392 2940,395 2940,395 M2940,249 2945,252 2951,256 2956,259 2956,259 M2956,372 2952,376 2948,379 2944,382 2940,384 M2940,260 2946,264 2952,268 2956,272 2956,272 M2956,358 2952,362 2948,366 2944,369 2940,372 M2940,274 2944,277 2948,280 2952,284 2956,290 2956,290 M2956,338 2953,344 2950,348 2946,352 2942,356 2940,357 M2940,294 2944,299 2946,304 2948,312 2947,320 2945,328 2943,332 2940,337 2940,337"/></svg>
<div class="r" style="left:0px;top:0px;width:2954px;height:6px;background:#3a63e4;"></div>
<div class="r" style="left:2px;top:14px;width:2946px;height:302px;background:#f3f3f3;border:2px solid #d9d6d3;border-radius:9px;box-shadow:0 2px 3px rgba(0,0,0,0.12);"></div>
<div class="r" style="left:8px;top:155.5px;width:2935px;height:152.5px;background:#ffffff;border-radius:0 0 7px 7px;"></div>
<div class="r" style="left:44px;top:52px;width:70px;height:70px;background:#e9837a;border-radius:9px;"></div>
<svg style="position:absolute;left:44px;top:52px" width="70" height="70" viewBox="0 0 70 70">
<path fill="#fff" stroke="#fff" stroke-width="1.4" stroke-linejoin="round" d="M23.00,34.90 L23.50,31.01 L28.50,31.01 L29.00,34.90 L29.61,35.17 L30.20,35.48 L30.76,35.83 L31.29,36.23 L34.91,34.72 L37.41,39.05 L34.29,41.43 L34.37,42.09 L34.40,42.75 L34.37,43.41 L34.29,44.07 L37.41,46.45 L34.91,50.78 L31.29,49.27 L30.76,49.67 L30.20,50.02 L29.61,50.33 L29.00,50.60 L28.50,54.49 L23.50,54.49 L23.00,50.60 L22.39,50.33 L21.80,50.02 L21.24,49.67 L20.71,49.27 L17.09,50.78 L14.59,46.45 L17.71,44.07 L17.63,43.41 L17.60,42.75 L17.63,42.09 L17.71,41.43 L14.59,39.05 L17.09,34.72 L20.71,36.23 L21.24,35.83 L21.80,35.48 L22.39,35.17 Z"/><path fill="#e9837a" d="M30.6,42.75 A4.6,4.6 0 1,0 21.4,42.75 A4.6,4.6 0 1,0 30.6,42.75 Z"/><path fill="#fff" stroke="#fff" stroke-width="1.4" stroke-linejoin="round" d="M43.80,18.04 L44.30,14.79 L48.10,14.79 L48.60,18.04 L49.08,18.25 L49.55,18.50 L50.00,18.78 L50.42,19.09 L53.49,17.90 L55.39,21.19 L52.82,23.25 L52.88,23.77 L52.90,24.30 L52.88,24.83 L52.82,25.35 L55.39,27.41 L53.49,30.70 L50.42,29.51 L50.00,29.82 L49.55,30.10 L49.08,30.35 L48.60,30.56 L48.10,33.81 L44.30,33.81 L43.80,30.56 L43.32,30.35 L42.85,30.10 L42.40,29.82 L41.98,29.51 L38.91,30.70 L37.01,27.41 L39.58,25.35 L39.52,24.83 L39.50,24.30 L39.52,23.77 L39.58,23.25 L37.01,21.19 L38.91,17.90 L41.98,19.09 L42.40,18.78 L42.85,18.50 L43.32,18.25 Z"/><path fill="#e9837a" d="M50.1,24.3 A3.9,3.9 0 1,0 42.300000000000004,24.3 A3.9,3.9 0 1,0 50.1,24.3 Z"/></svg>
<div class="t" style="left:140px;top:50.69px;font-size:29.9px;color:#3e3e3c;">Data Template</div>
<div class="t" style="left:140px;top:84.56px;font-size:39.5px;color:#080707;font-weight:bold;">Academy</div>
<div class="r" style="left:2375px;top:56px;width:532px;height:69px;background:#fff;border:2px solid #d9d7d5;border-radius:10px;"></div>
<div class="r" style="left:2498px;top:56px;width:2px;height:69px;background:#d9d7d5;"></div>
<div class="r" style="left:2658px;top:56px;width:2px;height:69px;background:#d9d7d5;"></div>
<div class="r" style="left:2838px;top:56px;width:2px;height:69px;background:#d9d7d5;"></div>
<div class="t" style="left:2375.0px;width:124px;text-align:center;top:76.61px;font-size:30px;color:#2a6fcf;">Edit</div>
<div class="t" style="left:2499.0px;width:160px;text-align:center;top:76.61px;font-size:30px;color:#2a6fcf;">Delete</div>
<div class="t" style="left:2659.0px;width:180px;text-align:center;top:76.61px;font-size:30px;color:#2a6fcf;">Activate</div>
<svg style="position:absolute;left:2862px;top:84px" width="22" height="14" viewBox="0 0 22 14"><path d="M0 0 L22 0 L11 14 Z" fill="#706e6b"/></svg>
<div class="t" style="left:44.7px;top:195.62px;font-size:27.5px;color:#3e3e3c;">Template Schema Credential</div>
<div class="t" style="left:541px;top:195.28px;font-size:27.9px;color:#3e3e3c;">Main Object</div>
<div class="t" style="left:832.6px;top:195.62px;font-size:27.5px;color:#3e3e3c;">Active</div>
<div class="t" style="left:44px;top:237.24px;font-size:28.9px;color:#2a6fcf;">Dev1</div>
<div class="r" style="left:44px;top:268px;width:70px;height:2px;background:repeating-linear-gradient(90deg,#2a6fcf 0 2px,transparent 2px 4px);"></div>
<div class="t" style="left:541.5px;top:233.58px;font-size:31.8px;color:#080707;">Account</div>
<div class="r" style="left:832px;top:234px;width:34px;height:35px;background:#f3f3f3;border:1.5px solid #c9c7c5;border-radius:4px;"></div>
<div class="r" style="left:5.8px;top:343.6px;width:2942.2px;height:1046.4px;background:#fff;border:2px solid #dbd8d5;border-bottom:none;border-radius:9px 9px 0 0;"></div>
<div class="r" style="left:44px;top:458px;width:2865px;height:2px;background:#dddbda;"></div>
<div class="t" style="left:70px;top:397.78px;font-size:35.7px;color:#3e3e3c;">Details</div>
<div class="t" style="left:284.6px;top:397.61px;font-size:35.9px;color:#3e3e3c;">Object Fields</div>
<div class="t" style="left:598px;top:397.70px;font-size:35.8px;color:#3e3e3c;">Parent Objects</div>
<div class="t" style="left:942px;top:398.49px;font-size:35.45px;color:#080707;font-weight:bold;">Child Objects</div>
<div class="t" style="left:1274.6px;top:397.70px;font-size:35.8px;color:#3e3e3c;">Main Object Filter</div>
<div class="t" style="left:1660px;top:397.27px;font-size:36.3px;color:#3e3e3c;">Deployment Options</div>
<div class="t" style="left:2093px;top:397.86px;font-size:35.6px;color:#3e3e3c;">Relationship Diagram</div>
<div class="r" style="left:914px;top:454px;width:282px;height:6px;background:#5a92ea;"></div>
<div class="r" style="left:44.5px;top:486.5px;width:2864.5px;height:903.5px;background:#f3f3f3;border:2px solid #dddbda;border-bottom:none;border-radius:9px 9px 0 0;"></div>
<div class="r" style="left:72px;top:520px;width:70px;height:70px;background:#969492;border-radius:8px;"></div>
<div class="r" style="left:86px;top:539.5px;width:6px;height:6.0px;background:#fff;border-radius:1.5px;"></div>
<div class="r" style="left:97px;top:539.5px;width:31px;height:6.0px;background:#fff;border-radius:2px;"></div>
<div class="r" style="left:86px;top:552px;width:6px;height:6px;background:#fff;border-radius:1.5px;"></div>
<div class="r" style="left:97px;top:552px;width:31px;height:6px;background:#fff;border-radius:2px;"></div>
<div class="r" style="left:86px;top:565px;width:6px;height:6px;background:#fff;border-radius:1.5px;"></div>
<div class="r" style="left:97px;top:565px;width:31px;height:6px;background:#fff;border-radius:2px;"></div>
<div class="t" style="left:169px;top:536.04px;font-size:36.1px;color:#080707;font-weight:bold;">Child Objects (10+)</div>
<div class="t" style="left:71.6px;top:627.68px;font-size:29.2px;color:#080707;">10+ Fields</div>
<div class="r" style="left:2454.5px;top:516.7px;width:291.0999999999999px;height:68.29999999999995px;background:#fff;border:2px solid #dddbda;border-radius:9px;"></div>
<div class="t" style="left:2454.55px;width:291px;text-align:center;top:537.03px;font-size:29.5px;color:#c9c7c5;">Refresh Schema</div>
<div class="r" style="left:2756px;top:516.7px;width:126px;height:68.29999999999995px;background:#fff;border:2px solid #dddbda;border-radius:9px;"></div>
<div class="t" style="left:2756.0px;width:126px;text-align:center;top:536.18px;font-size:30.5px;color:#c9c7c5;">Edit</div>
<div class="r" style="left:2002.2px;top:594px;width:879.8px;height:69.60000000000002px;background:#fff;border:2px solid #d9d7d5;border-radius:9px;"></div>
<svg style="position:absolute;left:2028px;top:615px" width="29" height="28" viewBox="0 0 29 28"><circle cx="11.9" cy="11" r="9.3" fill="none" stroke="#aeaaa8" stroke-width="3.3"/><path d="M18.3 17.6 L27.8 27" stroke="#aeaaa8" stroke-width="3.6" stroke-linecap="butt"/></svg>
<div class="t" style="left:2074.5px;top:614.84px;font-size:30.2px;color:#706e6b;">Search this list...</div>
<div class="r" style="left:45.5px;top:682px;width:2862.0px;height:74px;background:#fafaf9;border-top:2px solid #dbd9d7;border-bottom:2px solid #dbd9d7;"></div>
<div class="r" style="left:668px;top:684px;width:2px;height:70px;background:#aba7a5;"></div>
<div class="r" style="left:1108px;top:684px;width:2px;height:70px;background:#aba7a5;"></div>
<div class="r" style="left:1547.5px;top:684px;width:2.0px;height:70px;background:#aba7a5;"></div>
<div class="r" style="left:2905.5px;top:684px;width:2.0px;height:70px;background:#aba7a5;"></div>
<div class="r" style="left:178.2px;top:704.1px;width:35.5px;height:33.60000000000002px;background:#fff;border:2px solid #d9d7d5;border-radius:4px;"></div>
<svg style="position:absolute;left:185.5px;top:712.4px" width="19" height="16" viewBox="0 0 19 16"><path d="M2 9 L7 14 L17.5 2.5" fill="none" stroke="#2a6fd4" stroke-width="3.6" stroke-linecap="butt" stroke-linejoin="miter"/></svg>
<div class="t" style="left:249.2px;top:704.77px;font-size:29.8px;color:#444444;font-weight:bold;">Object Label</div>
<svg style="position:absolute;left:440.3px;top:708px" width="18" height="26" viewBox="0 0 18 26"><path d="M9 23 L9 6" fill="none" stroke="#706e6b" stroke-width="3.8" stroke-linecap="round"/><path d="M2.8 10.5 L9.1 4 L15.6 10.5" fill="none" stroke="#706e6b" stroke-width="3.6" stroke-linecap="round" stroke-linejoin="round"/><path d="M5 9 L9 4.5 L13 9 Z" fill="#706e6b"/></svg>
<div class="t" style="left:689.3px;top:704.77px;font-size:29.8px;color:#444444;font-weight:bold;">Object API Name</div>
<div class="t" style="left:1127.8px;top:704.86px;font-size:29.7px;color:#444444;font-weight:bold;">Relationship Name</div>
<div class="t" style="left:1568px;top:704.44px;font-size:30.2px;color:#444444;font-weight:bold;">Deployment Template</div>
<div class="r" style="left:45.5px;top:756.1px;width:2834.5px;height:90.0px;background:#ecebea;"></div>
<div class="r" style="left:45.5px;top:844.1px;width:2834.5px;height:2.0px;background:#dbd9d7;"></div>
<div class="t" style="left:95.5px;width:40px;text-align:center;top:787.65px;font-size:29px;color:#3e3e3c;">1</div>
<div class="r" style="left:178.6px;top:786.7px;width:35.0px;height:35.0px;background:#fff;border:2px solid #d9d7d5;border-radius:4px;"></div>
<svg style="position:absolute;left:185.9px;top:795.7px" width="19" height="16" viewBox="0 0 19 16"><path d="M2 9 L7 14 L17.5 2.5" fill="none" stroke="#2a6fd4" stroke-width="3.6" stroke-linecap="butt" stroke-linejoin="miter"/></svg>
<div class="t" style="left:249.4px;top:786.97px;font-size:29.8px;color:#080707;">Account</div>
<div class="t" style="left:689.5px;top:786.97px;font-size:29.8px;color:#080707;">Account</div>
<div class="t" style="left:1129.3px;top:786.97px;font-size:29.8px;color:#080707;">ChildAccounts</div>
<div class="r" style="left:1568px;top:766.3px;width:416px;height:68.5px;background:#fff;border:2px solid #d9d7d5;border-radius:8px;"></div>
<div class="t" style="left:1597.2px;top:786.97px;font-size:29.8px;color:#080707;">Account Template</div>
<svg style="position:absolute;left:1940px;top:794.5px" width="22" height="16" viewBox="0 0 22 16"><path d="M0 0 L22 0 L11 15.5 Z" fill="#706e6b"/></svg>
<div class="r" style="left:1992px;top:766.3px;width:267px;height:68.5px;background:#fff;border:2px solid #d9d7d5;border-radius:8px;"></div>
<div class="t" style="left:1993.0px;width:265px;text-align:center;top:786.97px;font-size:29.8px;color:#2a6fcf;">Data Template</div>
<div class="r" style="left:2268px;top:766.3px;width:133.5px;height:68.5px;background:#fff;border:2px solid #d9d7d5;border-radius:8px;"></div>
<div class="t" style="left:2268.75px;width:132px;text-align:center;top:786.97px;font-size:29.8px;color:#2a6fcf;">New</div>
<div class="r" style="left:45.5px;top:846.1px;width:2834.5px;height:91.89999999999998px;background:#ecebea;"></div>
<div class="r" style="left:45.5px;top:936.0px;width:2834.5px;height:2.0px;background:#dbd9d7;"></div>
<div class="t" style="left:95.5px;width:40px;text-align:center;top:877.65px;font-size:29px;color:#3e3e3c;">2</div>
<div class="r" style="left:178.6px;top:876.7px;width:35.0px;height:35.0px;background:#fff;border:2px solid #d9d7d5;border-radius:4px;"></div>
<svg style="position:absolute;left:185.9px;top:885.7px" width="19" height="16" viewBox="0 0 19 16"><path d="M2 9 L7 14 L17.5 2.5" fill="none" stroke="#2a6fd4" stroke-width="3.6" stroke-linecap="butt" stroke-linejoin="miter"/></svg>
<div class="t" style="left:249.4px;top:876.97px;font-size:29.8px;color:#080707;">Asset</div>
<div class="t" style="left:689.5px;top:876.97px;font-size:29.8px;color:#080707;">Asset</div>
<div class="t" style="left:1129.3px;top:876.97px;font-size:29.8px;color:#080707;">Assets</div>
<div class="r" style="left:1568px;top:856.3px;width:416px;height:68.5px;background:#fff;border:2px solid #d9d7d5;border-radius:8px;"></div>
<div class="t" style="left:1597.2px;top:876.97px;font-size:29.8px;color:#706e6b;">Select Template</div>
<svg style="position:absolute;left:1940px;top:884.5px" width="22" height="16" viewBox="0 0 22 16"><path d="M0 0 L22 0 L11 15.5 Z" fill="#706e6b"/></svg>
<div class="r" style="left:1992px;top:856.3px;width:133px;height:68.5px;background:#fff;border:2px solid #d9d7d5;border-radius:8px;"></div>
<div class="t" style="left:1993.0px;width:131px;text-align:center;top:876.97px;font-size:29.8px;color:#2a6fcf;">New</div>
<div class="r" style="left:45.5px;top:938.0px;width:2834.5px;height:89.70000000000005px;background:#ecebea;"></div>
<div class="r" style="left:45.5px;top:1025.7px;width:2834.5px;height:2.0px;background:#dbd9d7;"></div>
<div class="t" style="left:95.5px;width:40px;text-align:center;top:967.35px;font-size:29px;color:#3e3e3c;">3</div>
<div class="r" style="left:178.6px;top:966.4000000000001px;width:35.0px;height:35.0px;background:#fff;border:2px solid #d9d7d5;border-radius:4px;"></div>
<svg style="position:absolute;left:185.9px;top:975.4000000000001px" width="19" height="16" viewBox="0 0 19 16"><path d="M2 9 L7 14 L17.5 2.5" fill="none" stroke="#2a6fd4" stroke-width="3.6" stroke-linecap="butt" stroke-linejoin="miter"/></svg>
<div class="t" style="left:249.4px;top:966.67px;font-size:29.8px;color:#080707;">Asset</div>
<div class="t" style="left:689.5px;top:966.67px;font-size:29.8px;color:#080707;">Asset</div>
<div class="t" style="left:1129.3px;top:966.67px;font-size:29.8px;color:#080707;">ProvidedAssets</div>
<div class="r" style="left:1568px;top:946.0px;width:416px;height:68.5px;background:#fff;border:2px solid #d9d7d5;border-radius:8px;"></div>
<div class="t" style="left:1597.2px;top:966.67px;font-size:29.8px;color:#706e6b;">Select Template</div>
<svg style="position:absolute;left:1940px;top:974.2px" width="22" height="16" viewBox="0 0 22 16"><path d="M0 0 L22 0 L11 15.5 Z" fill="#706e6b"/></svg>
<div class="r" style="left:1992px;top:946.0px;width:133px;height:68.5px;background:#fff;border:2px solid #d9d7d5;border-radius:8px;"></div>
<div class="t" style="left:1993.0px;width:131px;text-align:center;top:966.67px;font-size:29.8px;color:#2a6fcf;">New</div>
<div class="r" style="left:45.5px;top:1027.7px;width:2834.5px;height:89.89999999999986px;background:#ecebea;"></div>
<div class="r" style="left:45.5px;top:1115.6px;width:2834.5px;height:2.0px;background:#dbd9d7;"></div>
<div class="t" style="left:95.5px;width:40px;text-align:center;top:1057.25px;font-size:29px;color:#3e3e3c;">4</div>
<div class="r" style="left:178.6px;top:1056.3px;width:35.0px;height:35.0px;background:#fff;border:2px solid #d9d7d5;border-radius:4px;"></div>
<svg style="position:absolute;left:185.9px;top:1065.3px" width="19" height="16" viewBox="0 0 19 16"><path d="M2 9 L7 14 L17.5 2.5" fill="none" stroke="#2a6fd4" stroke-width="3.6" stroke-linecap="butt" stroke-linejoin="miter"/></svg>
<div class="t" style="left:249.4px;top:1056.57px;font-size:29.8px;color:#080707;">Asset</div>
<div class="t" style="left:689.5px;top:1056.57px;font-size:29.8px;color:#080707;">Asset</div>
<div class="t" style="left:1129.3px;top:1056.57px;font-size:29.8px;color:#080707;">ServicedAssets</div>
<div class="r" style="left:1568px;top:1035.8999999999999px;width:416px;height:68.5px;background:#fff;border:2px solid #d9d7d5;border-radius:8px;"></div>
<div class="t" style="left:1597.2px;top:1056.57px;font-size:29.8px;color:#706e6b;">Select Template</div>
<svg style="position:absolute;left:1940px;top:1064.1px" width="22" height="16" viewBox="0 0 22 16"><path d="M0 0 L22 0 L11 15.5 Z" fill="#706e6b"/></svg>
<div class="r" style="left:1992px;top:1035.8999999999999px;width:133px;height:68.5px;background:#fff;border:2px solid #d9d7d5;border-radius:8px;"></div>
<div class="t" style="left:1993.0px;width:131px;text-align:center;top:1056.57px;font-size:29.8px;color:#2a6fcf;">New</div>
<div class="r" style="left:45.5px;top:1117.6px;width:2834.5px;height:90.30000000000018px;background:#ecebea;"></div>
<div class="r" style="left:45.5px;top:1205.9px;width:2834.5px;height:2.0px;background:#dbd9d7;"></div>
<div class="t" style="left:95.5px;width:40px;text-align:center;top:1147.55px;font-size:29px;color:#3e3e3c;">5</div>
<div class="r" style="left:178.6px;top:1146.6000000000001px;width:35.0px;height:35.0px;background:#fff;border:2px solid #d9d7d5;border-radius:4px;"></div>
<svg style="position:absolute;left:185.9px;top:1155.6000000000001px" width="19" height="16" viewBox="0 0 19 16"><path d="M2 9 L7 14 L17.5 2.5" fill="none" stroke="#2a6fd4" stroke-width="3.6" stroke-linecap="butt" stroke-linejoin="miter"/></svg>
<div class="t" style="left:249.4px;top:1146.87px;font-size:29.8px;color:#080707;">Associated Location</div>
<div class="t" style="left:689.5px;top:1146.87px;font-size:29.8px;color:#080707;">AssociatedLocation</div>
<div class="t" style="left:1129.3px;top:1146.87px;font-size:29.8px;color:#080707;">AssociatedLocations</div>
<div class="r" style="left:1568px;top:1126.2px;width:416px;height:68.5px;background:#fff;border:2px solid #d9d7d5;border-radius:8px;"></div>
<div class="t" style="left:1597.2px;top:1146.87px;font-size:29.8px;color:#706e6b;">Select Template</div>
<svg style="position:absolute;left:1940px;top:1154.4px" width="22" height="16" viewBox="0 0 22 16"><path d="M0 0 L22 0 L11 15.5 Z" fill="#706e6b"/></svg>
<div class="r" style="left:1992px;top:1126.2px;width:133px;height:68.5px;background:#fff;border:2px solid #d9d7d5;border-radius:8px;"></div>
<div class="t" style="left:1993.0px;width:131px;text-align:center;top:1146.87px;font-size:29.8px;color:#2a6fcf;">New</div>
<div class="r" style="left:45.5px;top:1207.9px;width:2834.5px;height:90.0px;background:#ecebea;"></div>
<div class="r" style="left:45.5px;top:1295.9px;width:2834.5px;height:2.0px;background:#dbd9d7;"></div>
<div class="t" style="left:95.5px;width:40px;text-align:center;top:1237.55px;font-size:29px;color:#3e3e3c;">6</div>
<div class="r" style="left:178.6px;top:1236.6000000000001px;width:35.0px;height:35.0px;background:#fff;border:2px solid #d9d7d5;border-radius:4px;"></div>
<svg style="position:absolute;left:185.9px;top:1245.6000000000001px" width="19" height="16" viewBox="0 0 19 16"><path d="M2 9 L7 14 L17.5 2.5" fill="none" stroke="#2a6fd4" stroke-width="3.6" stroke-linecap="butt" stroke-linejoin="miter"/></svg>
<div class="t" style="left:249.4px;top:1236.87px;font-size:29.8px;color:#080707;">Attachment</div>
<div class="t" style="left:689.5px;top:1236.87px;font-size:29.8px;color:#080707;">Attachment</div>
<div class="t" style="left:1129.3px;top:1236.87px;font-size:29.8px;color:#080707;">Attachments</div>
<div class="r" style="left:1568px;top:1216.2px;width:416px;height:68.5px;background:#fff;border:2px solid #d9d7d5;border-radius:8px;"></div>
<div class="t" style="left:1597.2px;top:1236.87px;font-size:29.8px;color:#706e6b;">Select Template</div>
<svg style="position:absolute;left:1940px;top:1244.4px" width="22" height="16" viewBox="0 0 22 16"><path d="M0 0 L22 0 L11 15.5 Z" fill="#706e6b"/></svg>
<div class="r" style="left:1992px;top:1216.2px;width:133px;height:68.5px;background:#fff;border:2px solid #d9d7d5;border-radius:8px;"></div>
<div class="t" style="left:1993.0px;width:131px;text-align:center;top:1236.87px;font-size:29.8px;color:#2a6fcf;">New</div>
<div class="r" style="left:45.5px;top:1297.9px;width:2834.5px;height:90.09999999999991px;background:#ecebea;"></div>
<div class="r" style="left:45.5px;top:1386.0px;width:2834.5px;height:2.0px;background:#dbd9d7;"></div>
<div class="t" style="left:95.5px;width:40px;text-align:center;top:1327.65px;font-size:29px;color:#3e3e3c;">7</div>
<div class="r" style="left:178.6px;top:1326.7px;width:35.0px;height:35.0px;background:#fff;border:2px solid #d9d7d5;border-radius:4px;"></div>
<svg style="position:absolute;left:185.9px;top:1335.7px" width="19" height="16" viewBox="0 0 19 16"><path d="M2 9 L7 14 L17.5 2.5" fill="none" stroke="#2a6fd4" stroke-width="3.6" stroke-linecap="butt" stroke-linejoin="miter"/></svg>
<div class="t" style="left:249.4px;top:1326.97px;font-size:29.8px;color:#080707;">Authorization Form Consent</div>
<div class="t" style="left:689.5px;top:1326.97px;font-size:29.8px;color:#080707;">AuthorizationFormConsent</div>
<div class="t" style="left:1129.3px;top:1326.97px;font-size:29.8px;color:#080707;">AuthorizationFormConsents</div>
<div class="r" style="left:1568px;top:1306.3px;width:416px;height:68.5px;background:#fff;border:2px solid #d9d7d5;border-radius:8px;"></div>
<div class="t" style="left:1597.2px;top:1326.97px;font-size:29.8px;color:#706e6b;">Select Template</div>
<svg style="position:absolute;left:1940px;top:1334.5px" width="22" height="16" viewBox="0 0 22 16"><path d="M0 0 L22 0 L11 15.5 Z" fill="#706e6b"/></svg>
<div class="r" style="left:1992px;top:1306.3px;width:133px;height:68.5px;background:#fff;border:2px solid #d9d7d5;border-radius:8px;"></div>
<div class="t" style="left:1993.0px;width:131px;text-align:center;top:1326.97px;font-size:29.8px;color:#2a6fcf;">New</div>
<div class="r" style="left:2880px;top:754.5px;width:26px;height:635.5px;background:#f9f9f9;"></div>
<div class="r" style="left:2886px;top:762px;width:16px;height:500px;background:#c1c1c1;border-radius:8px;"></div>
<div class="r" style="left:2906px;top:754.5px;width:1.5px;height:635.5px;background:#dddbda;"></div>
</body></html>
